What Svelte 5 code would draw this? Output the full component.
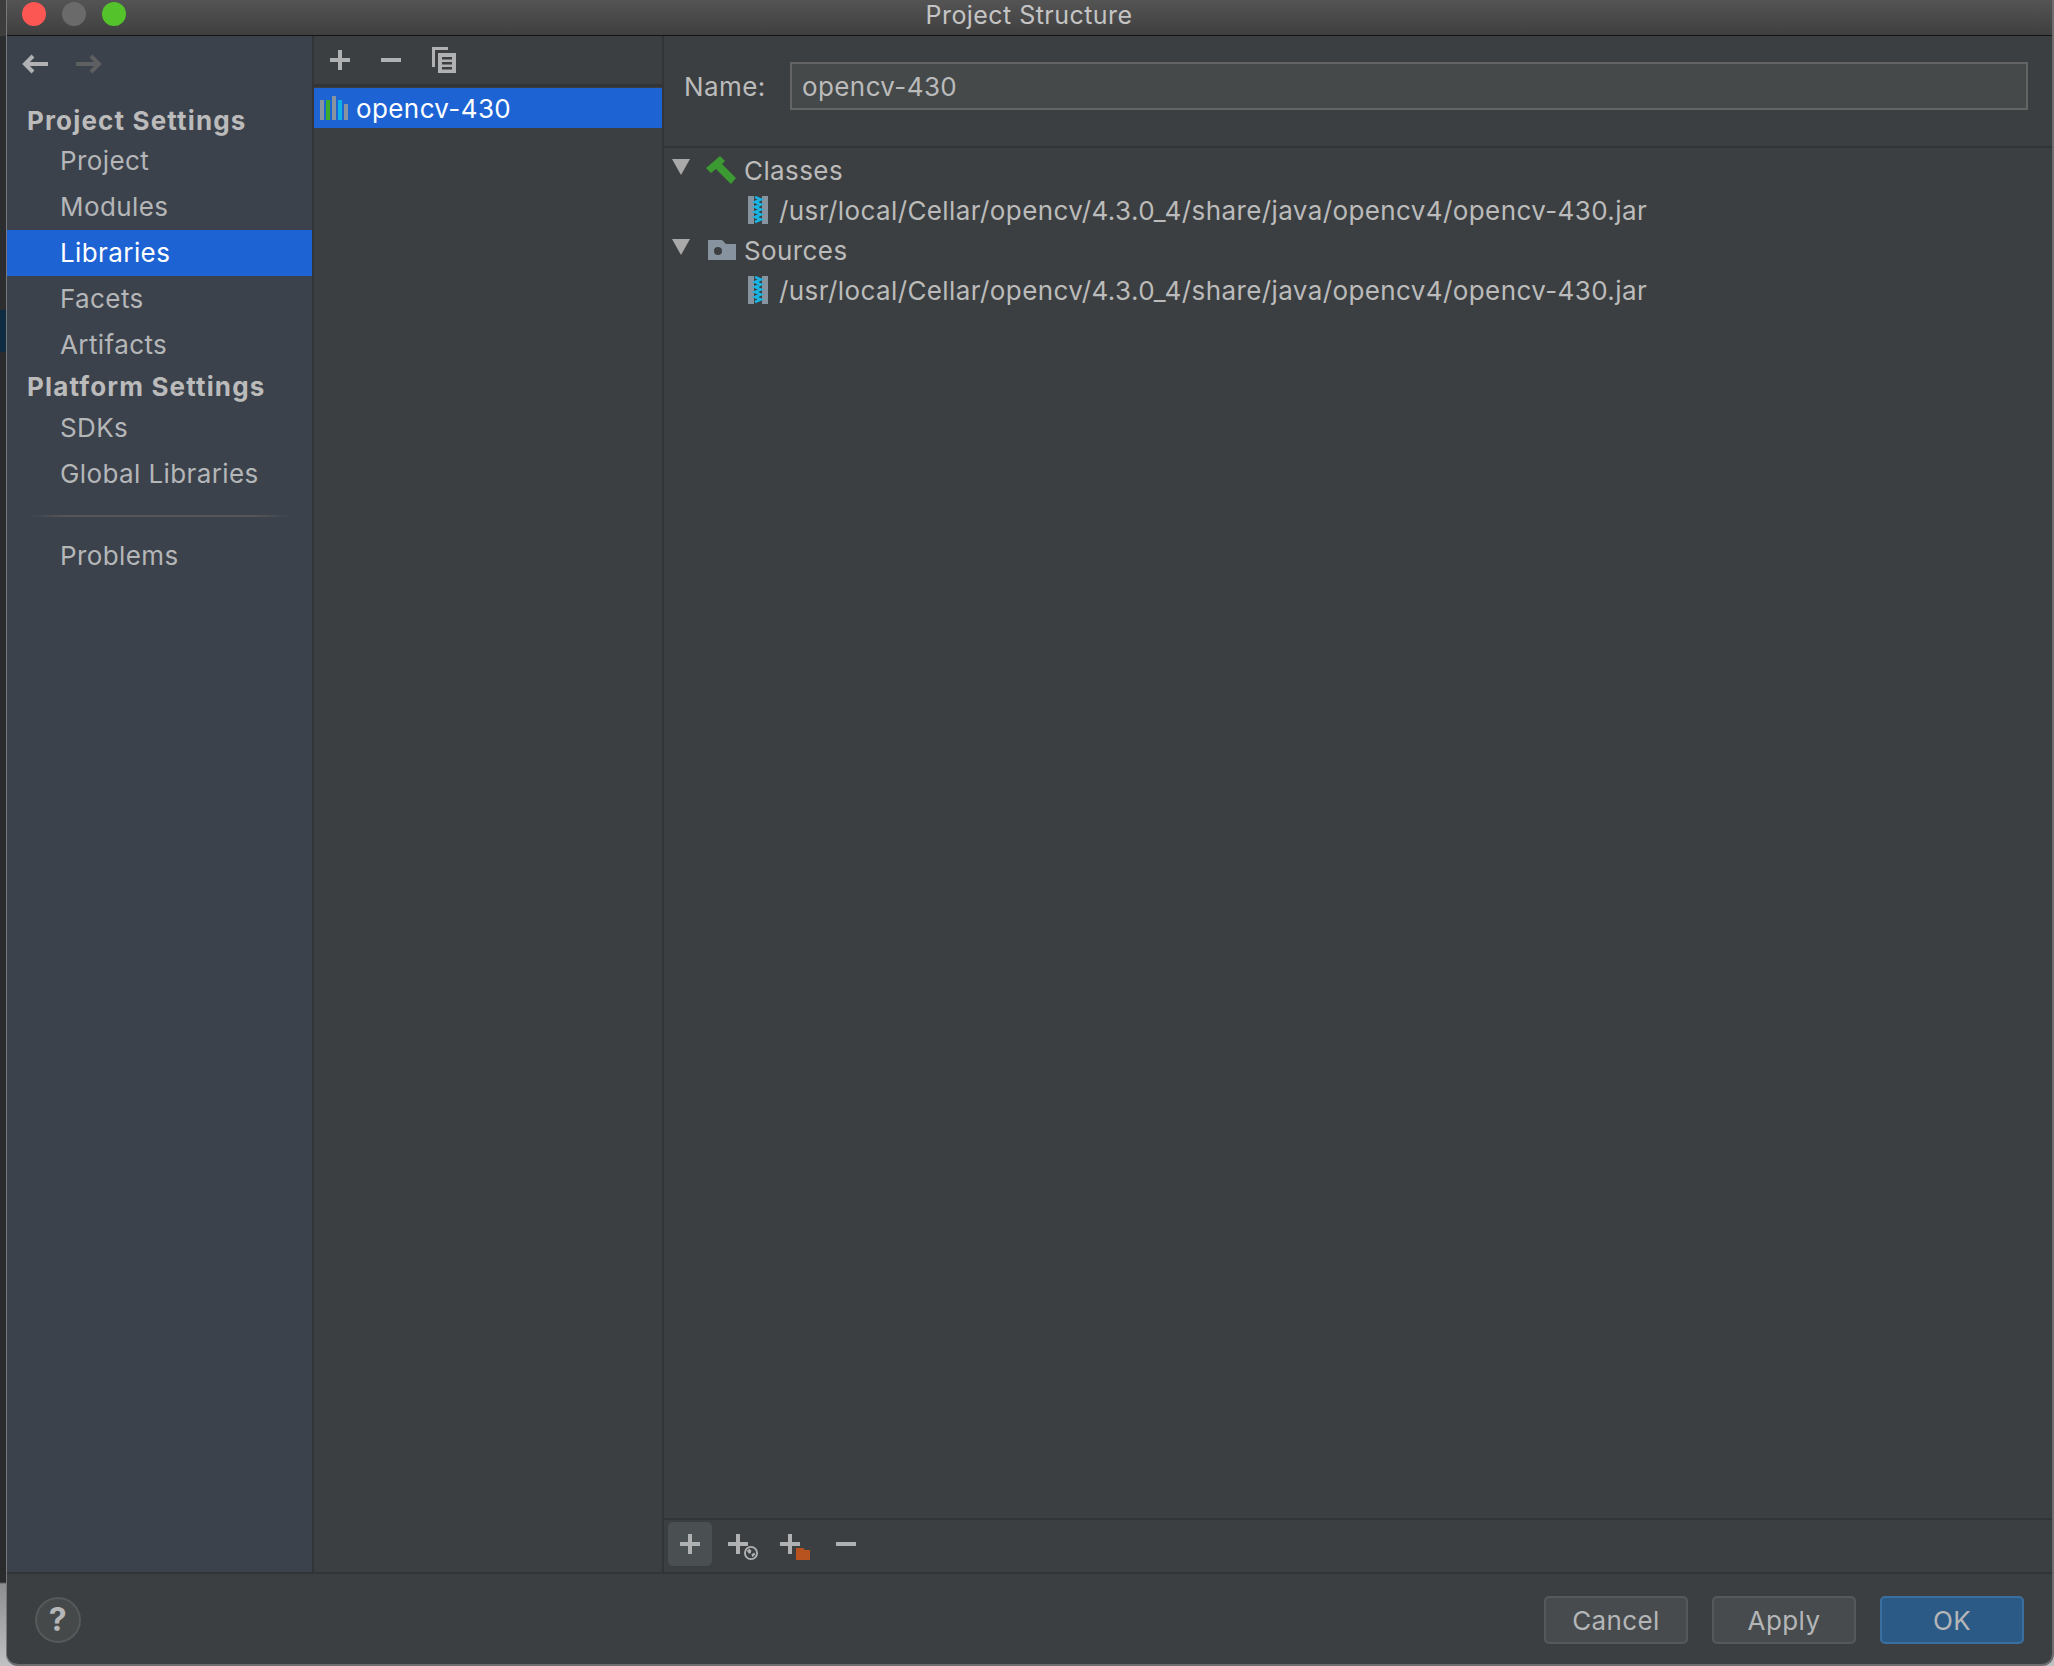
<script>
  const settings = [
    { label: 'Project Settings', head: true },
    { label: 'Project' },
    { label: 'Modules' },
    { label: 'Libraries', active: true },
    { label: 'Facets' },
    { label: 'Artifacts' },
    { label: 'Platform Settings', head: true },
    { label: 'SDKs' },
    { label: 'Global Libraries' }
  ];

  const jarPath = '/usr/local/Cellar/opencv/4.3.0_4/share/java/opencv4/opencv-430.jar';
</script>

{#snippet jar()}
  <svg class="jar" width="20" height="28" viewBox="0 0 20 28">
    <path d="M0 0h6v28H0zM14 0h6v28h-6z" fill="#87939e" />
    <path d="M7 1l6 2.500-6 2.500 6 2.500-6 2.500 6 2.500-6 2.500 6 2.500-6 2.500 6 2.500-6 2.500" fill="none" stroke="#19b4e2" stroke-width="2.500" />
  </svg>
{/snippet}

{#snippet plus()}
  <svg width="20" height="20" viewBox="0 0 20 20"><path d="M8 0h4v8h8v4h-8v8H8v-8H0V8h8z" fill="#afb1b3" /></svg>
{/snippet}

{#snippet minus()}
  <svg width="20" height="20" viewBox="0 0 20 20"><path d="M0 8h20v4H0z" fill="#afb1b3" /></svg>
{/snippet}

<div class="desktop">
  <div class="window">
    <header class="titlebar">
      <div class="lights">
        <span class="light red"></span>
        <span class="light grey"></span>
        <span class="light green"></span>
      </div>
      <span class="title">Project Structure</span>
    </header>

    <div class="body">
      <aside class="sidebar">
        <div class="nav-arrows">
          <svg width="26" height="20" viewBox="0 0 26 20"><path d="M11 2L3 10l8 8M3 10h23" fill="none" stroke="#afb1b3" stroke-width="4" /></svg>
          <svg width="26" height="20" viewBox="0 0 26 20"><path d="M15 2l8 8-8 8M23 10H0" fill="none" stroke="#5d5f61" stroke-width="4" /></svg>
        </div>
        <ul class="nav">
          {#each settings as item}
            <li class:head={item.head} class:active={item.active}>{item.label}</li>
          {/each}
        </ul>
        <div class="nav-sep"></div>
        <div class="nav-problems">Problems</div>
      </aside>

      <section class="libs">
        <div class="libs-toolbar">
          {@render plus()}
          {@render minus()}
          <svg width="24" height="26" viewBox="0 0 24 26">
            <path d="M0 0h16v3H3v17H0z" fill="#afb1b3" />
            <path d="M6 6h18v20H6z" fill="#afb1b3" />
            <path d="M10 10h10v2.500H10zM10 15h10v2.500H10zM10 20h10v2.500H10z" fill="#3c3f41" />
          </svg>
        </div>
        <div class="lib-row">
          <svg width="28" height="24" viewBox="0 0 28 24">
            <rect x="0" y="4" width="4" height="20" fill="#87939e" />
            <rect x="6" y="4" width="4" height="20" fill="#3cab2d" />
            <rect x="12" y="0" width="4" height="24" fill="#87939e" />
            <rect x="18" y="4" width="4" height="20" fill="#10b2e6" />
            <rect x="24" y="8" width="4" height="16" fill="#87939e" />
          </svg>
          <span>opencv-430</span>
        </div>
      </section>

      <section class="detail">
        <div class="name-row">
          <label for="lib-name">Name:</label>
          <input id="lib-name" value="opencv-430" />
        </div>

        <div class="tree">
          <div class="tree-row">
            <span class="caret"></span>
            <svg class="root-icon" width="30" height="28" viewBox="0 0 30 28">
              <path d="M0 12L14 0l5 5-3 3 14 14-5 6L10 13l-5 4z" fill="#3c9a33" />
            </svg>
            <span>Classes</span>
          </div>
          <div class="tree-row child">{@render jar()}<span>{jarPath}</span></div>
          <div class="tree-row">
            <span class="caret"></span>
            <svg class="root-icon folder-icon" width="28" height="20" viewBox="0 0 28 20">
              <path d="M0 0h14l4 4h10v16H0z" fill="#87939e" />
              <circle cx="10" cy="11" r="4" fill="#3c3f41" />
            </svg>
            <span>Sources</span>
          </div>
          <div class="tree-row child">{@render jar()}<span>{jarPath}</span></div>
        </div>

        <div class="tree-toolbar">
          <span class="tool pressed">{@render plus()}</span>
          <span class="tool">
            {@render plus()}
            <svg class="badge globe" width="14" height="14" viewBox="0 0 15 15">
              <circle cx="7.500" cy="7.500" r="6.500" fill="#3c3f41" stroke="#afb1b3" stroke-width="2" />
              <path d="M3 5l3-2 2 2-1 3-2 0zM8 9l3-2 1 2-3 3z" fill="#afb1b3" />
            </svg>
          </span>
          <span class="tool wide">
            {@render plus()}
            <svg class="badge folder" width="14" height="12" viewBox="0 0 14 12"><path d="M0 0h7l2 2h5v10H0z" fill="#b8531f" /></svg>
          </span>
          <span class="tool wider">{@render minus()}</span>
        </div>
      </section>
    </div>

    <footer class="footer">
      <button class="help">?</button>
      <div class="actions">
        <button>Cancel</button>
        <button>Apply</button>
        <button class="primary">OK</button>
      </div>
    </footer>
  </div>
</div>

<style>
  :global(body) {
    margin: 0;
    background: #2b2c2e;
  }

  .desktop {
    height: 1666px;
    padding-left: 6px;
    box-sizing: border-box;
    background: linear-gradient(
      #3d3d3d 0,
      #3d3d3d 36px,
      #2c2d2e 36px,
      #2c2d2e 310px,
      #0f2b42 310px,
      #0f2b42 352px,
      #2a2b2d 352px,
      #2a2b2d 1582px,
      #8d8e90 1584px,
      #c0c1c3 100%
    );
    overflow: hidden;
    font-family: Inter, "Liberation Sans", sans-serif;
    color: #bbbbbb;
    font-size: 26px;
    letter-spacing: 0.4px;
  }

  .window {
    height: 100%;
    box-sizing: border-box;
    display: flex;
    flex-direction: column;
    background: #3c3f41;
    border-left: 1px solid #76787c;
    border-right: 2px solid #6b6d6f;
    border-bottom: 2px solid #6b6d6f;
    border-bottom-left-radius: 12px;
    border-bottom-right-radius: 12px;
    overflow: hidden;
  }

  .titlebar {
    height: 35px;
    flex: none;
    display: flex;
    align-items: center;
    justify-content: center;
    position: relative;
    background: linear-gradient(#545454, #3f3f3f);
    border-bottom: 1px solid #141414;
  }

  .title {
    margin-left: -1px;
    font-size: 25px;
    letter-spacing: 0.45px;
    color: #c4c4c4;
    padding-bottom: 5px;
  }

  .lights {
    position: absolute;
    left: 15px;
    top: 2px;
    display: flex;
    gap: 16px;
  }

  .light {
    width: 24px;
    height: 24px;
    border-radius: 50%;
  }

  .red { background: #fc5753; }
  .grey { background: #6a6a6a; }
  .green { background: #53c22b; }

  .body {
    flex: 1;
    min-height: 0;
    display: flex;
  }

  .sidebar {
    width: 305px;
    flex: none;
    background: #3c424c;
    border-right: 2px solid #323436;
  }

  .nav-arrows {
    height: 67px;
    padding: 18px 0 0 15px;
    box-sizing: border-box;
    display: flex;
    gap: 28px;
    align-items: flex-start;
  }

  .nav {
    list-style: none;
    margin: 0;
    padding: 0;
  }

  .nav li {
    height: 46px;
    line-height: 46px;
    padding-left: 53px;
    color: #b4b6b8;
  }

  .nav li.head {
    height: 37px;
    line-height: 38px;
    padding-left: 20px;
    font-weight: 700;
    letter-spacing: 1.15px;
    color: #bbbbbb;
  }

  .nav li.head:first-child {
    height: 35px;
    line-height: 35px;
  }

  .nav li.active {
    background: #1d63d4;
    color: #ffffff;
  }

  .nav-sep {
    height: 2px;
    margin: 18px 20px 16px 20px;
    background: linear-gradient(90deg, #3c424c, #55565a 15%, #55565a 85%, #3c424c);
  }

  .nav-problems {
    height: 46px;
    line-height: 46px;
    padding-left: 53px;
    color: #b4b6b8;
  }

  .libs {
    width: 348px;
    flex: none;
    background: #3c3f41;
    border-right: 2px solid #323436;
  }

  .libs-toolbar {
    height: 48px;
    display: flex;
    align-items: center;
    gap: 31px;
    padding-left: 16px;
    border-bottom: 3px solid #323436;
  }

  .lib-row {
    height: 40px;
    margin-top: 1px;
    display: flex;
    align-items: center;
    gap: 8px;
    padding-left: 6px;
    background: #1d63d4;
    color: #ffffff;
  }

  .detail {
    flex: 1;
    min-width: 0;
    display: flex;
    flex-direction: column;
  }

  .name-row {
    height: 112px;
    flex: none;
    display: flex;
    align-items: flex-start;
    padding: 26px 24px 0 20px;
    box-sizing: border-box;
    gap: 24px;
    border-bottom: 2px solid #323436;
  }

  .name-row label {
    width: 82px;
    line-height: 50px;
  }

  .name-row input {
    flex: 1;
    height: 48px;
    box-sizing: border-box;
    padding: 0 10px;
    background: #45494a;
    border: 2px solid #646464;
    color: #bbbbbb;
    font: inherit;
    letter-spacing: inherit;
  }

  .tree {
    flex: 1;
    padding-top: 2px;
  }

  .tree-row {
    height: 40px;
    display: flex;
    align-items: center;
    padding-left: 8px;
  }

  .tree-row.child {
    padding-left: 84px;
    gap: 11px;
  }

  .caret {
    width: 0;
    height: 0;
    border-left: 9px solid transparent;
    border-right: 9px solid transparent;
    border-top: 16px solid #a9a9a9;
    margin-bottom: 6px;
    margin-right: 16px;
  }

  .root-icon {
    margin-right: 8px;
  }

  .folder-icon {
    margin-left: 2px;
  }

  .tree-toolbar {
    height: 50px;
    flex: none;
    display: flex;
    align-items: flex-start;
    gap: 4px;
    padding: 2px 0 0 4px;
    box-sizing: content-box;
    border-top: 2px solid #323436;
  }

  .tool {
    width: 44px;
    height: 44px;
    display: flex;
    align-items: center;
    justify-content: center;
    position: relative;
    border-radius: 5px;
  }

  .tool.wide {
    margin-left: 4px;
  }

  .tool.wider {
    margin-left: 8px;
  }

  .tool.pressed {
    background: #4a4f52;
  }

  .badge {
    position: absolute;
  }

  .globe {
    left: 28px;
    top: 24px;
  }

  .folder {
    left: 28px;
    top: 26px;
  }

  .footer {
    height: 92px;
    flex: none;
    display: flex;
    align-items: center;
    justify-content: space-between;
    padding: 2px 28px 0 28px;
    border-top: 2px solid #323436;
    box-sizing: border-box;
  }

  button {
    width: 144px;
    height: 48px;
    box-sizing: border-box;
    background: #474b4d;
    border: 2px solid #565859;
    border-radius: 5px;
    color: #b4b6b8;
    font: inherit;
    letter-spacing: inherit;
    padding: 0;
  }

  .actions {
    display: flex;
    gap: 24px;
  }

  button.primary {
    background: #2c5a87;
    border-color: #3a6f9f;
  }

  .help {
    width: 46px;
    height: 46px;
    border-radius: 50%;
    background: #45494a;
    font-size: 32px;
    font-weight: 700;
    line-height: 1;
  }
</style>
